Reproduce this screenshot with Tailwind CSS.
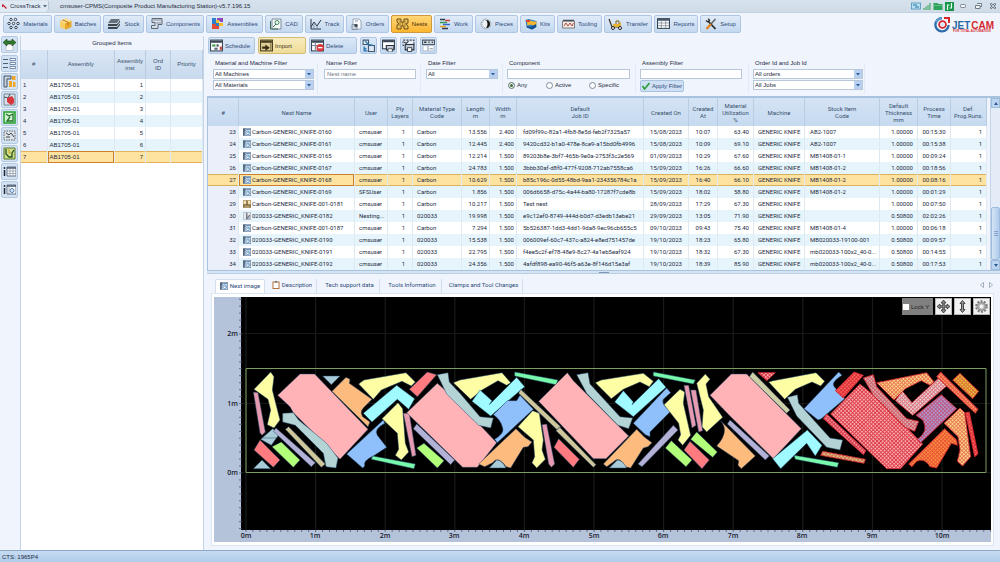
<!DOCTYPE html>
<html lang="en">
<head>
<meta charset="UTF-8">
<meta name="viewport" content="width=device-width, initial-scale=1.0">
<title>CrossTrack</title>
<script src="https://cdn.jsdelivr.net/npm/@tailwindcss/browser@4"></script>
</head>
<body class="font-['Liberation_Sans',sans-serif] text-[6px] leading-[8px] text-[#1d2b3f] bg-[#f0f5fd]">

<!-- Shared icons -->
<svg class="hidden">
  <symbol id="i-job" viewBox="0 0 10 10">
    <rect width="10" height="10" fill="#7f95ad"/><path d="M3 1h6v8H3z" fill="#e6eff9"/><path d="M1 1v8M2.500 1v3" stroke="#33475e"/><circle cx="6" cy="6" r="2.300" fill="#fff" stroke="#2a6fa8" stroke-width=".8"/><path d="M6 4.500V6h1.500" stroke="#2a6fa8" stroke-width=".7" fill="none"/><path d="M4 2h5" stroke="#3b6fa0"/>
  </symbol>
  <symbol id="i-grid" viewBox="0 0 12 12">
    <rect x=".5" y="1.500" width="11" height="9" fill="#fff" stroke="#3a4756"/><path d="M1 2.500h10" stroke="#47586c" stroke-width="2"/><path d="M1 5.500h10M1 8h10M4 3v7M8 3v7" stroke="#7a8796" stroke-width=".7"/>
  </symbol>
  <symbol id="i-test" viewBox="0 0 10 10">
    <rect width="10" height="10" fill="#b39a6b"/><path d="M1 1h3v5H1zM6 1h3v5H6z" fill="#efe0b6"/><path d="M1 9V6h8v3M5 1v5" stroke="#5f4a25" fill="none"/>
  </symbol>
  <symbol id="i-nest" viewBox="0 0 10 10">
    <rect width="10" height="10" fill="#b4bcc4"/><path d="M1 1h3v8H1zM6 1h3v3H6z" fill="#e8ecef"/><path d="M4.500 1v8M9 4L6 6v3" stroke="#55606b" fill="none"/>
  </symbol>
</svg>

<div class="min-h-screen flex flex-col">

  <!-- Title bar -->
  <header class="h-[13px] flex items-center bg-gradient-to-b from-[#d6e2ec] to-[#cfdce8] border-b border-[#c3d2e0] shrink-0">
    <button class="h-[11px] w-[49px] flex items-center gap-[3px] pl-[2px] bg-[#dfe9f4] border-r border-[#b9c9da] rounded-br">
      <svg class="size-[5px]" viewBox="0 0 5 5"><path d="M.5.5l4 4M.5.5v2.500" stroke="#c4212b" stroke-width="1.200" fill="none"/></svg>
      <span>CrossTrack</span>
      <svg class="w-[4px] h-[3px]" viewBox="0 0 4 3"><path d="M0 0h4L2 2.500z" fill="#51677f"/></svg>
    </button>
    <h1 class="ml-[11px]">cmsuser-CPMS(Composite Product Manufacturing Station)-v5.7.196.15</h1>
    <div class="ml-auto flex items-center gap-[2px]">
      <svg class="w-[10px] h-[8px]" viewBox="0 0 10 8"><rect x=".5" y="1" width="9" height="6" fill="#b9e0f2" stroke="#4a92b8" stroke-width=".8"/><path d="M2 3h4M4 5h4" stroke="#28769f"/></svg>
      <svg class="size-[8px]" viewBox="0 0 8 8"><path d="M1 8V6M3 8V4.500M5 8V3M7 8V1" stroke="#53ad72" stroke-width="1.300"/></svg>
      <svg class="w-[10px] h-[8px]" viewBox="0 0 10 8"><path d="M.5 1h4l1 1h4v6h-9z" fill="#2ba35a"/><path d="M.5 3.500h9" stroke="#83d29f" stroke-width=".6"/></svg>
      <svg class="size-[9px]" viewBox="0 0 9 9"><rect width="9" height="9" fill="#169447"/><path d="M2.500 8V3h2M6.500 1v5h-2" stroke="#eafff0" stroke-width="1.200" fill="none"/></svg>
      <button class="w-[14px] grid place-items-center" aria-label="Minimize"><svg class="w-[6px] h-[4px]" viewBox="0 0 6 4"><rect x=".5" y=".5" width="5" height="3" rx="1" fill="#f5f8fb" stroke="#62707e" stroke-width=".8"/></svg></button>
      <button class="w-[12px] grid place-items-center" aria-label="Restore"><svg class="size-[7px]" viewBox="0 0 7 7"><path d="M2 .5h4.500v3H5M.5 2.500H5v3H.5z" fill="#f5f8fb" stroke="#62707e" stroke-width=".9"/></svg></button>
      <button class="w-[14px] grid place-items-center" aria-label="Close"><svg class="size-[6px]" viewBox="0 0 6 6"><path d="M.5.5l5 5M5.500.5l-5 5" stroke="#62707e" stroke-width="2"/><path d="M1 1l4 4M5 1L1 5" stroke="#f5f8fb" stroke-width=".7"/></svg></button>
    </div>
  </header>

  <!-- Main toolbar -->
  <nav class="flex items-center gap-[2px] pl-[3px] pt-px h-[20px] shrink-0 text-[#2d4a78] *:h-[18px] *:flex *:items-center *:justify-center *:gap-[3px] [&>button]:rounded-xs [&>button]:border [&>button]:border-[#afc7e2] [&>button]:bg-gradient-to-b [&>button]:from-[#e0ebf8] [&>button]:to-[#c3d8f0] [&_svg]:shrink-0">
    <button class="w-[49px]">
      <svg class="size-[13px]" viewBox="0 0 13 13"><g fill="#fff" stroke="#2d3c50"><circle cx="4" cy="2.500" r="1.200"/><circle cx="8.500" cy="2.500" r="1.200"/><circle cx="2" cy="6.500" r="1.200"/><circle cx="6.500" cy="6.500" r="1.200"/><circle cx="11" cy="6.500" r="1.200"/><circle cx="4" cy="10.500" r="1.200"/><circle cx="9" cy="10.500" r="1.200"/></g></svg>Materials</button>
    <button class="w-[47px]">
      <svg class="size-[13px]" viewBox="0 0 13 13"><path d="M1 4l6-2.500L12.500 4v6L7 12.500 1 10z" fill="#e8a52c"/><path d="M1 4l5 2v6.500L1 10z" fill="#f7cf62"/><path d="M1 4l6-2.500L12.500 4 6 6.200z" fill="#ffe39a"/><path d="M3.500 3l5.500 2.200V8" stroke="#b87413" fill="none"/></svg>Batches</button>
    <button class="w-[41px]">
      <svg class="w-[14px] h-[12px]" viewBox="0 0 14 12"><path d="M4 1h9l-3 4H1z" fill="#66717d"/><path d="M1 6h9l3-4v2l-3 4H1zM1 9h9l3-4v2l-3 4H1z" fill="#3d4752"/><path d="M1 5.500h9l3-4M1 8.500h9l3-4" stroke="#c8d0d8" stroke-width=".7" fill="none"/></svg>Stock</button>
    <button class="w-[58px]">
      <svg class="size-[13px]" viewBox="0 0 13 13"><path d="M2 1.500h10v6H8v4H1.500v-3H5v-3H2z" fill="#d8dee6" stroke="#5a6777"/><path d="M3 3h8M6 6h5" stroke="#8894a2"/></svg>Components</button>
    <button class="w-[57px]">
      <svg class="size-[13px]" viewBox="0 0 13 13"><path d="M1 1h4v5h3v6H1z" fill="#2c7fce"/><path d="M6 1h6v4H9V4H6z" fill="#9048b8"/><path d="M5 3h3v3h4v3H8V6H5z" fill="#f4be2c"/><path d="M1 7h4v2h3v3H1z" fill="#e34b33"/></svg>Assemblies</button>
    <button class="w-[38px]">
      <svg class="size-[12px]" viewBox="0 0 12 12"><path d="M2 1h9v10H2z" fill="#f4f7f4" stroke="#657585" stroke-width=".8"/><circle cx="7" cy="4.500" r="2" fill="none" stroke="#3d8a63"/><path d="M.5 3v8H8M3 9l3-3" stroke="#3d6c52" fill="none"/></svg>CAD</button>
    <button class="w-[39px]">
      <svg class="size-[12px]" viewBox="0 0 12 12"><path d="M1 1v10h10M1 9l3-5 3 4 4-6" fill="none" stroke="#2c3748"/><path d="M4 4v6M7 8v2" stroke="#687688" stroke-width=".7"/></svg>Track</button>
    <button class="w-[43px]">
      <svg class="size-[12px]" viewBox="0 0 12 12"><path d="M2 1h6l2 2v8H2z" fill="#fafcff" stroke="#7a8796" stroke-width=".7"/><path d="M4 3h3M1 6.500h5v5H1z" stroke="#8895a3" fill="#cad3dc"/><circle cx="5" cy="7.500" r="1.700" fill="#454f5b"/></svg>Orders</button>
    <button class="w-[41px] text-[#3b2500] from-[#ffd777]! to-[#fdb62c]! border-[#cf9a3e]!">
      <svg class="w-[13px] h-[12px]" viewBox="0 0 13 12"><path d="M1 1h4v3h3V1h4v4l-2 1 2 2v3H8V8H5v3H1V7l2-1-2-2z" fill="#e9bd53" stroke="#5d4716" stroke-width=".9"/><path d="M6.500 4v4M4 3v5M9 3v5" stroke="#86651c" stroke-width=".7"/></svg>Nests</button>
    <button class="w-[39px]">
      <svg class="size-[12px]" viewBox="0 0 12 12"><path d="M1 1.500h5M3 10.500h6" stroke="#2f3d4e" stroke-width="1.500"/><path d="M6 2.500h5" stroke="#d63d32" stroke-width="1.500"/><path d="M1 4.500h7" stroke="#2e9c4c" stroke-width="1.500"/><path d="M4 6.500h7" stroke="#3369cf" stroke-width="1.500"/><path d="M1 8.500h6" stroke="#e3a324" stroke-width="1.500"/></svg>Work</button>
    <button class="w-[43px]">
      <svg class="size-[12px]" viewBox="0 0 12 12"><circle cx="6" cy="6" r="5" fill="#eef2f6" stroke="#9aa6b2" stroke-width=".8"/><path d="M6 2a4 4 0 0 1 0 8 6 6 0 0 0 0-8z" fill="#111"/><path d="M6 2a4 4 0 0 0 0 8" fill="none" stroke="#77828d" stroke-width=".8" stroke-dasharray="1 1"/></svg>Pieces</button>
    <button class="w-[35px]">
      <svg class="w-[12px] h-[12px]" viewBox="0 0 12 12"><path d="M.5 2l3-1 8 2v6l-4 2.500-6-2z" fill="#2d84cf"/><path d="M2 4c3-4 6 1 9.500-1v4c-3 2-5-2-9 1z" fill="#f7b52b"/><path d="M1 2h4v2H1z" fill="#e2472e"/><path d="M2 8l4 1 5-3v3l-4 2.500-5-2z" fill="#174b8a"/></svg>Kits</button>
    <button class="w-[45px]">
      <svg class="w-[13px] h-[10px]" viewBox="0 0 13 10"><path d="M.5 2h12v7H.5z" fill="#f2ece8" stroke="#6b5f5d" stroke-width=".8"/><path d="M1 1.500h11" stroke="#4b4f57" stroke-width="1.500"/><path d="M2 7l2-3 2 3 2-3 2 3 1.500-3" stroke="#b2493d" fill="none"/></svg>Tooling</button>
    <button class="w-[48px]">
      <svg class="w-[15px] h-[12px]" viewBox="0 0 15 12"><path d="M1 1l3 8h9" stroke="#3a3325" stroke-width="1.200" fill="none"/><path d="M5 6h6l2-2v5H5z" fill="#e6b32e"/><path d="M8 6V3h3v3" stroke="#83620f" fill="none"/><g fill="#fff" stroke="#222"><circle cx="5" cy="10" r="1.500"/><circle cx="12" cy="10" r="1.500"/></g></svg>Transfer</button>
    <button class="w-[44px]"><svg class="size-[13px]"><use href="#i-grid"/></svg>Reports</button>
    <button class="w-[41px]">
      <svg class="size-[12px]" viewBox="0 0 12 12"><path d="M3 3l7.500 8" stroke="#2b2b2b" stroke-width="1.800"/><path d="M.8 2.500L3 4l1.500-1.500L3.300.7" stroke="#2b2b2b" stroke-width="1.300" fill="none"/><path d="M10.500 1L6 6" stroke="#555" stroke-width="1.200"/><path d="M6 6l-4.500 5" stroke="#e2801c" stroke-width="2.200"/></svg>Setup</button>
    <div class="ml-auto pt-[2px]">
      <svg class="w-[67px] h-[17px]" viewBox="0 0 67 17" role="img" aria-label="JETCAM for total automation">
        <path d="M9 2.200A6.600 6.600 0 1 0 15.600 9" fill="none" stroke="#2c6ca8" stroke-width="2.300"/>
        <path d="M9 2.200a6.600 6.600 0 0 0-6 4" fill="none" stroke="#5b9bca" stroke-width="2.300"/>
        <path d="M11 1h6v6h-2V3h-4z" fill="#d5282e"/>
        <circle cx="9.500" cy="8.500" r="3.400" fill="none" stroke="#d5282e" stroke-width="1.800"/><circle cx="9.500" cy="8.500" r="1.200" fill="#c9dcee"/>
        <text x="19" y="13" font-size="10" font-weight="bold" fill="#2a689f">JET<tspan dx="1" fill="#d5282e">CAM</tspan></text>
        <text x="20" y="16" font-size="3" font-weight="bold" fill="#d5282e">FOR TOTAL AUTOMATION</text>
      </svg>
    </div>
  </nav>

  <div class="flex flex-1 pt-[3px]">

    <!-- Left tool strip -->
    <aside class="w-[20px] shrink-0 flex flex-col items-center gap-px pr-px [&>button]:size-[17px] [&>button]:grid [&>button]:place-items-center [&>button]:rounded-xs [&>button]:border [&>button]:border-[#b3c9e2] [&>button]:bg-[#d3e2f3] [&_svg]:size-[13px]">
      <button class="mb-px" aria-label="Exchange"><svg viewBox="0 0 13 13"><path d="M3 6h7v6.500H3z" fill="#fff" stroke="#a6b3c0" stroke-width=".7"/><path d="M0 4.500L4 1v2h5V1l4 3.500L9 8V6H4v2z" fill="#2f7a2c" stroke="#173f16" stroke-width=".6"/></svg></button>
      <button aria-label="Group rows"><svg viewBox="0 0 13 13"><path d="M0 2.500h5M0 6.500h5M0 10.500h5" stroke="#4d5f73"/><path d="M7 1.500h5.500v2H7zM7 5.500h5.500v2H7zM7 9.500h5.500v2H7z" fill="#fff" stroke="#5a7396" stroke-width=".8"/></svg></button>
      <button aria-label="Nest parts"><svg viewBox="0 0 13 13"><path d="M1 1h7v3H4v8H1z" fill="#c7d2dd" stroke="#40536a"/><path d="M9 1h3.500v4H9zM6 6h3v6H6zM10 7h2.500v5H10z" fill="#f2a52b"/></svg></button>
      <button aria-label="Stop nest"><svg viewBox="0 0 13 13"><path d="M1 1h11v11H1z" fill="#d7dfe8" stroke="#7b8795"/><path d="M1 4l4 1 2-4" stroke="#3d4d60" fill="none"/><path d="M4 5l5-2 2 3v4l-3 2-4-3z" fill="#d7373c"/></svg></button>
      <button aria-label="Approve nest"><svg viewBox="0 0 13 13"><path d="M1 1h11v11H1z" fill="#d4efd2" stroke="#20a02b" stroke-width="1.500"/><path d="M3 3l3 2 4-2v7H4l3-4" fill="none" stroke="#1c7327" stroke-width="1.300"/></svg></button>
      <button aria-label="Scrap nest"><svg viewBox="0 0 13 13"><path d="M1 2h11v9H1z" fill="#dce1e6" stroke="#5c6670" stroke-dasharray="1.500 1"/><path d="M3 4l3 2 2-2 3 4M3 8h4" stroke="#3e4852" fill="none"/></svg></button>
      <button aria-label="Edit nest"><svg viewBox="0 0 13 13"><path d="M1 1h11v11H1z" fill="#cfe08c" stroke="#57742a"/><path d="M3 2v5l3 3h3V6l2-3" fill="none" stroke="#26521e" stroke-width="1.300"/><path d="M6 2v4h2" stroke="#c79f1f" fill="none"/></svg></button>
      <button aria-label="Grid columns"><svg viewBox="0 0 13 13"><path d="M4 2h9v9H4z" fill="#fff" stroke="#44566c" stroke-width=".8"/><path d="M4 3h9" stroke="#44566c" stroke-width="1.500"/><path d="M4 6h9M4 8.500h9M7 3v8M10 3v8" stroke="#8290a0" stroke-width=".7"/><path d="M1.500 5v6" stroke="#1d2733" stroke-width="1.500"/><circle cx="1.500" cy="3" r=".9" fill="#1d2733"/></svg></button>
      <button aria-label="Row details"><svg viewBox="0 0 13 13"><path d="M4 2h9v9H4z" fill="#fff" stroke="#44566c" stroke-width=".8"/><path d="M4 3h9" stroke="#44566c" stroke-width="1.500"/><circle cx="9" cy="7.500" r="2" fill="#dcebfa" stroke="#4a7fb8"/><path d="M6 3v8" stroke="#8290a0" stroke-width=".7"/><path d="M1.500 5v6" stroke="#1d2733" stroke-width="1.500"/><circle cx="1.500" cy="3" r=".9" fill="#1d2733"/></svg></button>
    </aside>

    <!-- Grouped items -->
    <section class="w-[184px] shrink-0 flex flex-col bg-white border-x border-[#c5d5e8]">
      <h2 class="h-[14px] pt-[3px] text-center bg-[#f0f5fd]">Grouped Items</h2>
      <table class="w-full table-fixed border-collapse">
        <colgroup><col class="w-[26px]"><col><col class="w-[31px]"><col class="w-[25px]"><col class="w-[32px]"></colgroup>
        <thead>
          <tr class="h-[29px] bg-gradient-to-b from-[#d9e6f4] to-[#c9daee] text-[#38506e] [&>th]:font-normal [&>th]:leading-[7px] [&>th]:border-r [&>th]:border-[#b9cce2] [&>th]:p-0">
            <th>#</th><th>Assembly</th><th>Assembly<br>inst</th><th>Ord<br>ID</th><th>Priority</th>
          </tr>
        </thead>
        <tbody id="groupedRows"></tbody>
      </table>
    </section>

    <main class="flex-1 min-w-0 flex flex-col pl-[3px]">

      <!-- Actions -->
      <div class="flex gap-[3px] pl-px pt-px text-[#2d4a78] [&>button]:h-[17px] [&>button]:w-[17px] [&>button]:flex [&>button]:items-center [&>button]:justify-center [&>button]:gap-[2px] [&>button]:rounded-xs [&>button]:border [&>button]:border-[#afc7e2] [&>button]:bg-gradient-to-b [&>button]:from-[#dbe8f7] [&>button]:to-[#c3d8f0] [&_svg]:size-[13px]">
        <button class="w-[47px]! justify-start! pl-px"><svg viewBox="0 0 12 12"><rect x=".5" y="1" width="11" height="10" fill="#fff" stroke="#3a4756"/><path d="M1 2.500h10" stroke="#3a4756" stroke-width="2"/><path d="M2 5h3v2H2z" fill="#3a9b4b"/><path d="M6 5h2v2H6z" fill="#3d4a58"/><path d="M9 7h2v3H9z" fill="#cf433a"/><path d="M4 8h3v2H4z" fill="#5a6b7c"/></svg>Schedule</button>
        <button class="w-[48px]! justify-start! pl-px text-[#3b3216] border-[#d2bd74]! from-[#f8ecbd]! to-[#efdc98]!"><svg viewBox="0 0 12 12"><rect x=".5" y="1" width="11" height="10" fill="#dfcf98" stroke="#4b4022"/><path d="M1 2.500h10" stroke="#4b4022" stroke-width="2"/><path d="M2 7h3V5l4 3-4 3V9H2z" fill="#3a2e12"/><path d="M10 4v6" stroke="#7c6a39"/></svg>Import</button>
        <button class="w-[48px]! justify-start! pl-px"><svg viewBox="0 0 12 12"><rect x=".5" y="1" width="11" height="10" fill="#fff" stroke="#3a4756"/><path d="M1 2.500h10" stroke="#3a4756" stroke-width="2"/><path d="M1 6h10M4 3v8" stroke="#7a8796"/><circle cx="8.500" cy="8" r="3.500" fill="#d8393b"/><path d="M6.500 8h4" stroke="#fff" stroke-width="1.200"/></svg>Delete</button>
        <button aria-label="Nest report"><svg viewBox="0 0 12 12"><path d="M1 1h5v4H1zM6 6h5.500v5.500H6z" fill="#dde9f3" stroke="#44596f"/><path d="M3 2l3 3 4 1M2 7v4h3M2 9h2" stroke="#2a77a8" fill="none" stroke-width="1.200"/></svg></button>
        <button aria-label="Print grid"><svg viewBox="0 0 12 12"><rect x=".5" y="1" width="11" height="8" fill="#fff" stroke="#3a4756"/><path d="M1 2h10" stroke="#3a4756" stroke-width="2"/><path d="M4 6h7v4H4z" fill="#c3ccd6" stroke="#27323e"/><path d="M5.500 9h4v3h-4z" fill="#fff" stroke="#27323e" stroke-width=".7"/></svg></button>
        <button aria-label="Print nest"><svg viewBox="0 0 12 12"><path d="M1 1h10v5H1z" fill="#e7edf3" stroke="#3a4756" stroke-dasharray="2 1"/><path d="M3 5h8v5H3z" fill="#c3ccd6" stroke="#27323e"/><path d="M5 8h4v3.500H5z" fill="#fff" stroke="#27323e" stroke-width=".8"/><path d="M2 3l2 1 2-2" stroke="#27323e" fill="none"/></svg></button>
        <button aria-label="Labels"><svg viewBox="0 0 12 12"><path d="M.5 1h11v4H.5z" fill="#d0dae3" stroke="#4c5b6b"/><path d="M2 3h2M6 3h1M9 3h1" stroke="#27323e" stroke-width="1.500"/><path d="M1 6h4v5H1zM6 6h5v5H6z" fill="#fff" stroke="#a9b6c3" stroke-width=".7"/><path d="M7 9h3" stroke="#8b98a5"/></svg></button>
      </div>

      <!-- Filters -->
      <form class="flex gap-[4px] pl-[5px] pt-[3px] h-[42px] [&_fieldset]:border-r [&_fieldset]:border-[#e1eaf5] [&_fieldset]:h-[37px] [&_legend]:h-[12px] [&_legend]:pt-[2px] [&_legend]:pl-[2px] [&_input[type=text]]:block [&_input[type=text]]:h-[10px] [&_input[type=text]]:w-full [&_input[type=text]]:bg-white [&_input[type=text]]:border [&_input[type=text]]:border-[#b8c8da] [&_input[type=text]]:px-[2px] [&_select]:appearance-none [&_select]:block [&_select]:w-full [&_select]:h-[10px] [&_select]:leading-[8px] [&_select]:px-px [&_select]:bg-white [&_select]:border [&_select]:border-[#b8c8da]">
        <fieldset class="w-[106px] pl-px pr-[3px]">
          <legend>Material and Machine Filter</legend>
          <div class="relative mb-px"><select aria-label="Machine"><option>All Machines</option></select><span class="absolute right-px inset-y-px w-[8px] bg-[#b9d1f0] grid place-items-center pointer-events-none"><svg class="w-[4px] h-[3px]" viewBox="0 0 4 3"><path d="M0 0h4L2 2.500z" fill="#2f5b98"/></svg></span></div>
          <div class="relative"><select aria-label="Material"><option>All Materials</option></select><span class="absolute right-px inset-y-px w-[8px] bg-[#b9d1f0] grid place-items-center pointer-events-none"><svg class="w-[4px] h-[3px]" viewBox="0 0 4 3"><path d="M0 0h4L2 2.500z" fill="#2f5b98"/></svg></span></div>
        </fieldset>
        <fieldset class="w-[99px] pl-[2px] pr-[4px]">
          <legend>Name Filter</legend>
          <input type="text" placeholder="Nest name" aria-label="Name Filter" class="placeholder:text-[#6b7683]">
        </fieldset>
        <fieldset class="w-[78px] pl-px pr-[4px]">
          <legend>Date Filter</legend>
          <div class="relative"><select aria-label="Date Filter"><option>All</option></select><span class="absolute right-px inset-y-px w-[8px] bg-[#b9d1f0] grid place-items-center pointer-events-none"><svg class="w-[4px] h-[3px]" viewBox="0 0 4 3"><path d="M0 0h4L2 2.500z" fill="#2f5b98"/></svg></span></div>
        </fieldset>
        <fieldset class="w-[129px] pr-[5px]">
          <legend>Component</legend>
          <input type="text" aria-label="Component">
          <div class="flex pt-[2px] pl-px [&>label]:flex [&>label]:items-center [&>label]:gap-[2px] [&_input]:appearance-none [&_input]:size-[7px] [&_input]:rounded-full [&_input]:border [&_input]:border-[#7d8b9a] [&_input]:bg-white [&_input]:checked:bg-[#3d6a35] [&_input]:checked:shadow-[inset_0_0_0_1px_#fff]">
            <label class="w-[38px]"><input type="radio" name="component" checked>Any</label>
            <label class="w-[43px]"><input type="radio" name="component">Active</label>
            <label><input type="radio" name="component">Specific</label>
          </div>
        </fieldset>
        <fieldset class="w-[109px] pr-[6px]">
          <legend>Assembly Filter</legend>
          <input type="text" aria-label="Assembly Filter">
          <button type="button" class="mt-px h-[12px] w-[44px] flex items-center justify-center gap-[2px] whitespace-nowrap bg-[#cfe0f4] border border-[#a9c2de] rounded-xs text-[#2d4a78]"><svg class="size-[8px] shrink-0" viewBox="0 0 8 8"><path d="M.5 4l2 3 5-6" stroke="#2f9e3b" stroke-width="1.700" fill="none"/></svg>Apply Filter</button>
        </fieldset>
        <fieldset class="w-[112px] pr-px">
          <legend>Order Id and Job Id</legend>
          <div class="relative mb-px"><select aria-label="Order Id"><option>All orders</option></select><span class="absolute right-px inset-y-px w-[8px] bg-[#b9d1f0] grid place-items-center pointer-events-none"><svg class="w-[4px] h-[3px]" viewBox="0 0 4 3"><path d="M0 0h4L2 2.500z" fill="#2f5b98"/></svg></span></div>
          <div class="relative"><select aria-label="Job Id"><option>All Jobs</option></select><span class="absolute right-px inset-y-px w-[8px] bg-[#b9d1f0] grid place-items-center pointer-events-none"><svg class="w-[4px] h-[3px]" viewBox="0 0 4 3"><path d="M0 0h4L2 2.500z" fill="#2f5b98"/></svg></span></div>
        </fieldset>
      </form>

      <!-- Nests table -->
      <div class="flex border-y border-[#a9c3de] border-t-2 font-['Roboto',sans-serif]">
        <div class="flex-1 min-w-0">
        <table class="w-full table-fixed border-collapse border-l border-[#a9c3de]">
          <colgroup>
            <col class="w-[31px]"><col class="w-[116px]"><col class="w-[33px]"><col class="w-[25px]"><col class="w-[49px]"><col class="w-[28px]"><col class="w-[27px]"><col><col class="w-[45px]"><col class="w-[29px]"><col class="w-[36px]"><col class="w-[51px]"><col class="w-[75px]"><col class="w-[38px]"><col class="w-[33px]"><col class="w-[36px]">
          </colgroup>
          <thead>
            <tr class="h-[28px] bg-gradient-to-b from-[#d4e3f4] to-[#c6daf0] text-[#38506e] [&>th]:font-normal [&>th]:leading-[7px] [&>th]:border-r [&>th]:border-[#b9cce2] [&>th]:p-0">
              <th>#</th><th>Nest Name</th><th>User</th><th>Ply<br>Layers</th><th>Material Type<br>Code</th><th>Length<br>m</th><th>Width<br>m</th><th>Default<br>Job ID</th><th>Created On</th><th>Created<br>At</th><th>Material<br>Utilization<br>%</th><th>Machine</th><th>Stock Item<br>Code</th><th>Default<br>Thickness<br>mm</th><th>Process<br>Time</th><th>Def.<br>Prog.Runs.</th>
            </tr>
          </thead>
          <tbody id="nestRows"></tbody>
        </table>
        </div>
        <!-- Scrollbar -->
        <div class="w-[13px] pl-[3px] flex flex-col bg-[#f0f5fd]">
          <div class="flex-1 flex flex-col bg-[#e3ecf7] border-l border-[#c3d4e8]">
            <button class="h-[10px] bg-[#bcd4f0] border border-[#9fbbdc] grid place-items-center" aria-label="Scroll up"><svg class="w-[4px] h-[3px]" viewBox="0 0 4 3"><path d="M0 3h4L2 0z" fill="#2f5b98"/></svg></button>
            <div class="flex-1"></div>
            <div class="h-[53px] bg-gradient-to-r from-[#d5e4f6] to-[#aecaeb] border border-[#9fbbdc] rounded-xs grid place-items-center"><svg class="w-[4px] h-[5px]" viewBox="0 0 4 5"><path d="M0 .5h4M0 2.500h4M0 4.500h4" stroke="#7798c0" stroke-width=".8"/></svg></div>
            <button class="h-[10px] bg-[#bcd4f0] border border-[#9fbbdc] grid place-items-center" aria-label="Scroll down"><svg class="w-[4px] h-[3px]" viewBox="0 0 4 3"><path d="M0 0h4L2 3z" fill="#2f5b98"/></svg></button>
          </div>
        </div>
      </div>
      <div class="h-[3px] bg-[#d5e4f4] border-b border-[#b9cfe6] grid place-items-center shrink-0"><span class="w-[10px] h-px bg-[#7d97b5]"></span></div>

      <!-- Tabs -->
      <div class="flex items-end pt-[5px] pl-[8px] gap-[3px] text-[#2d4a78] font-['Roboto',sans-serif] [&>button]:h-[14px] [&>button]:pb-[2px] [&>button]:flex [&>button]:items-center [&>button]:justify-center [&>button]:gap-[2px] [&>button]:border-r [&>button]:border-[#d3dfed]">
        <button class="w-[50px] bg-white border-x border-t rounded-t-xs"><svg class="size-[8px]"><use href="#i-job"/></svg>Nest image</button>
        <button class="w-[49px]"><svg class="size-[8px]" viewBox="0 0 8 8"><rect x="1" y="1" width="6" height="6.500" fill="#fff" stroke="#b2713a"/><path d="M3 .8h2" stroke="#6c6c6c" stroke-width="1.400"/></svg>Description</button>
        <button class="w-[60px]">Tech support data</button>
        <button class="w-[59px]">Tools Information</button>
        <button class="w-[78px]">Clamps and Tool Changes</button>
        <div class="ml-auto flex gap-[5px] pr-[7px] pb-[5px]">
          <svg class="w-[4px] h-[6px]" viewBox="0 0 4 6"><path d="M3.500.5v5L.5 3z" fill="#fff" stroke="#7d8ea2" stroke-width=".7"/></svg>
          <svg class="w-[4px] h-[6px]" viewBox="0 0 4 6"><path d="M.5.5v5l3-2.500z" fill="#fff" stroke="#7d8ea2" stroke-width=".7"/></svg>
        </div>
      </div>

      <!-- Nest drawing -->
      <div class="relative flex-1 flex flex-col bg-white border border-[#dbe5f1] ml-[4px] mr-[6px] mb-[4px] px-[2px] pt-[3px] pb-[3px]">
        <svg class="w-full bg-black" viewBox="214 297 777 245" font-family="'Open Sans', sans-serif" font-size="7" font-weight="600">
          <defs>
            <pattern id="ticksX" x="245.500" y="530" width="6.960" height="12" patternUnits="userSpaceOnUse"><path d="M.5 0v2" stroke="#48566e" stroke-width=".8"/></pattern>
            <pattern id="ticksY" x="239" y="333.500" width="3" height="6.950" patternUnits="userSpaceOnUse"><path d="M0 .5h3" stroke="#48566e" stroke-width=".8"/></pattern>
            <pattern id="gridX" x="245.500" y="0" width="69.600" height="600" patternUnits="userSpaceOnUse"><path d="M.5 0v600" stroke="#1b1f1b" stroke-width="1"/></pattern>
            <pattern id="hatch" width="8" height="8" patternUnits="userSpaceOnUse" patternTransform="rotate(45)"><path d="M0 4H8M4 0V8" stroke="#d21f2c" stroke-width="3.200"/></pattern>
          </defs>
          <rect x="214" y="297" width="777" height="245" fill="#b5c3da"/>
          <rect x="241" y="297" width="750" height="233" fill="#000"/>
          <rect x="241" y="297" width="750" height="233" fill="url(#gridX)"/>
          <path d="M241 333.500h750M241 403.500h750M241 472.500h750" stroke="#151815"/>
          <rect x="241" y="530" width="750" height="3" fill="url(#ticksX)"/>
          <rect x="239" y="297" width="3" height="233" fill="url(#ticksY)"/>
          <g fill="#16202e" text-anchor="end"><text x="238" y="336">2m</text><text x="238" y="406">1m</text><text x="238" y="475">0m</text></g>
          <g fill="#16202e" text-anchor="middle">
            <text x="246" y="538">0m</text><text x="315" y="538">1m</text><text x="385" y="538">2m</text><text x="454" y="538">3m</text><text x="524" y="538">4m</text><text x="594" y="538">5m</text><text x="663" y="538">6m</text><text x="733" y="538">7m</text><text x="802" y="538">8m</text><text x="872" y="538">9m</text><text x="942" y="538">10m</text>
          </g>
          <path d="M246 368.500h740v104H246z" fill="none" stroke="#7d9c62"/>

          <!-- Sheet 0m to 3.6m -->
          <g transform="translate(240 360) scale(.33333)" stroke="#24466a" stroke-width="1.500">
            <path fill="#feffa5" d="M42 88L92 36l10 14-5 40 23 90-18 24-20-10 10-44-8-32zM356 72l16-12 126-22 28 28-12 12-28-14-62 26-24 28zM474 128l14 18 8 104 10 26-22 24-18-14 10-18-4-48-46-44zM640 68l20-8 126-22 26 30-12 8-26-14-48 28-34 28z"/>
            <path fill="#e79bb0" d="M40 96l14 2 22 118-10 10-6-8zM490 160h18l20 126-12 4z"/>
            <path fill="#ffb3b7" d="M180 42h44l160 166-84 90-140-140-10-18-37-34zM592 70l48 42 96 100 34 36-58 74h-44L500 158z"/>
            <path fill="#a9cbd8" d="M248 48h52l-26 26zM62 238l36-32 20 16-24 34zM66 300l-26 26h52z"/>
            <path fill="#fdbb7d" d="M318 52l12 6-2 12 68 48-24 24q-14 14-4 28l22 16-6 14L276 94z"/>
            <path fill="#9ffbff" d="M470 76l54 40-18 32-34-30-76 68-26-26z"/>
            <path fill="#ff7b80" d="M562 36l28 8-58 66-24-22zM60 240l60 60-20 22-58-52z"/>
            <path fill="#b4d3d5" d="M592 44l32-6 4 28 32 34 60 70 40 4-8 30-36-8-96-94zM128 160l32-2 16 22 84 70 34 44-6 30-30-4-8-40-84-84-38-10z"/>
            <path fill="#b3b1d6" d="M108 204l118 104-12 12L100 214zM530 192l114 108-12 14-112-108z"/>
            <path fill="#cfc69a" d="M146 200l110 112-12 10-108-114z"/>
            <path fill="#b2ff79" d="M124 246l56 54-20 22-64-62zM552 250l60 52-20 22-62-60z"/>
            <path fill="#90c0fb" d="M430 180l4 10q-34 18-22 36l28 36-40 26q-32 14-26 30l-6 6-48-42z"/>
            <path fill="#78f9ac" d="M398 288l128 24-4 14-128-28z"/>
            <path d="M66 234h48" fill="none"/>
          </g>

          <!-- Sheet 3.6m to 7m -->
          <g transform="translate(480 360) scale(.33333)" stroke="#24466a" stroke-width="1.500">
            <path fill="#9ffbff" d="M0 90l-24 34 56 44L134 80l-24-28-82 82 8-12zM430 92l30 34-4 8 80-78 22 26-98 88-56-44z"/>
            <path fill="#90c0fb" d="M120 106l40 42L52 248l-8-10q30-18 24-34-6-26-28-40l42-42h28zM560 84l12 14-22 20q-8 14 22 36l-62 62v14l-14-6-36-34z"/>
            <path fill="#cfc69a" d="M122 88l120 112-10 10L116 100zM238 200l110 114-8 8-112-110z"/>
            <path fill="#78f9ac" d="M104 36l130 24-6 14-124-26zM520 36l126 24-6 12-120-24z"/>
            <path fill="#feffa5" d="M158 152l20 8 12 80-4 30 10 28-26 26-14-16 8-18-4-50-46-40zM346 68l18-8 126-20 30 24-12 16-28-14-50 22-36 28zM600 88l14 8-4 34 22 96-24 30-14-16 8-16-6-34-44-56zM676 42l14 16-12 14 8 38 42 62-48 44-14-16 4-50-20-80z"/>
            <path fill="#e79bb0" d="M186 194l14-2 24 120-10 10-8-10zM612 76h14l22 120-12 8zM632 90h16l20 122-12 4z"/>
            <path fill="#ff7b80" d="M236 236l62 62-18 24-58-60zM630 244l58 56-22 26-54-56z"/>
            <path fill="#fdbb7d" d="M108 206l26 26 22 14-12 14-14 2-38 62-14-4q-24-34-40-12L14 320l-18-8zM470 208l24 24 22 16-12 12-14 4-38 60-16-4q-18-34-36-14l-20 14-10-8zM722 182l104 106-42 38-10-10 2-14-66-44q40-44 12-76z"/>
            <path fill="#a9cbd8" d="M50 300l-22 24h50q-12-24-28-24zM412 300l-24 24h52q-12-24-28-24z"/>
            <path fill="#ffb3b7" d="M262 38l18 24 166 166-68 68h-38L176 124z"/>
            <path fill="#b4d3d5" d="M290 44l34-6 6 34 90 98 38 4-12 32-32-10-94-96z"/>
            <path fill="#b3b1d6" d="M580 196l14 14-108 110-12-8z"/>
            <path fill="#b2ff79" d="M650 216l62 60-14 16-66-54zM574 242l62 58-18 20-62-56z"/>
          </g>

          <!-- Sheet 7m to the end -->
          <g transform="translate(730 360) scale(.33333)" stroke="#24466a" stroke-width="1.500">
            <path fill="#ffb3b7" d="M4 42h46l164 164-84 90L0 168l-60-62z"/>
            <path fill="#b3b1d6" d="M0 180l118 108-12 12L-8 192z"/>
            <path fill="#cfcfa5" d="M68 36l112 114-10 10L58 50z"/>
            <path fill="#feffa5" d="M116 66l14-4 128-24 26 26-12 14-26-12-50 22-32 30z"/>
            <path fill="#90c0fb" d="M326 36l10 10q-36 22-22 36l30 34-70 60-10 4-42-34z"/>
            <path fill="#b4d3d5" d="M172 112l30-8 4 26 94 104 38 6-8 30-40-8-90-94z"/>
            <path fill="#9ffbff" d="M232 210l44 46-20 32-26-38-78 76-24-30z"/>
            <path fill="#78f9ac" d="M192 286l134 22-4 14-126-24z"/>
          </g>
          <!-- Parts with warnings are cross-hatched -->
          <g transform="translate(730 360) scale(.33333)" stroke="#c4212b" stroke-width="2.500">
            <path fill="#ffb3b7" d="M84 38h52l-26 24zM390 72l70 58 118 122-66 74h-42L302 162z"/>
            <path fill="#e8dde0" d="M516 92l30 36 80-74 24 24-102 88-52-44z"/>
            <path fill="#ff6a62" d="M372 36l28 10-60 68-24-22zM706 158l12-2 26 126-10 8z"/>
            <path fill="#f093a0" d="M290 162l118 110-8 12-120-108z"/>
            <path fill="#d9d08a" d="M278 274l128 24-4 12-130-24z"/>
            <path fill="#d6b2b6" d="M400 54l30-10 10 36 90 96 36 8-12 30-34-14-90-94z"/>
            <path fill="#ffe08a" d="M440 68l150-30 22 28-12 10-26-14-48 24-34 34zM690 144l14 14 18 132-24 28-16-14 8-34-6-40-42-40z"/>
            <path fill="#ff9a66" d="M632 36l112 112-8 12L620 50z"/>
            <path fill="#e8c93f" d="M690 40l56 54-18 22-60-56z"/>
            <path fill="#a9a0e0" d="M634 104l46 42-110 104-8-12q36-24 16-58l-20-14z"/>
            <path fill="#ff9440" d="M644 206l36 34 2 16-18-6-44 74-20-4q-16-28-40-16l-14 16-10-8z"/>
          </g>
          <g transform="translate(730 360) scale(.33333)" fill="url(#hatch)">
            <path d="M84 38h52l-26 24zM390 72l70 58 118 122-66 74h-42L302 162zM372 36l28 10-60 68-24-22zM706 158l12-2 26 126-10 8zM290 162l118 110-8 12-120-108z" opacity=".8"/>
            <path d="M516 92l30 36 80-74 24 24-102 88-52-44zM278 274l128 24-4 12-130-24zM400 54l30-10 10 36 90 96 36 8-12 30-34-14-90-94zM440 68l150-30 22 28-12 10-26-14-48 24-34 34zM690 144l14 14 18 132-24 28-16-14 8-34-6-40-42-40zM632 36l112 112-8 12L620 50zM690 40l56 54-18 22-60-56zM634 104l46 42-110 104-8-12q36-24 16-58l-20-14zM644 206l36 34 2 16-18-6-44 74-20-4q-16-28-40-16l-14 16-10-8z" opacity=".55"/>
          </g>
        </svg>
        <div class="absolute top-[4px] right-[3px] flex gap-[2px] [&>button]:size-[17px] [&>button]:bg-[#f1f1f1] [&>button]:border [&>button]:border-[#b5b5b5] [&>button]:grid [&>button]:place-items-center [&_svg]:size-[13px]">
          <label class="w-[31px] h-[17px] flex items-center gap-[2px] pl-px bg-[#808080] text-[#222]"><input type="checkbox" class="appearance-none size-[6px] bg-white checked:bg-[#2b6cb0]">Lock Y</label>
          <button aria-label="Pan"><svg viewBox="0 0 13 13"><path d="M6.500 0L9 3H7.300v2.700H10V4l3 2.500L10 9V7.300H7.300V10H9l-2.500 3L4 10h1.700V7.300H3V9L0 6.500 3 4v1.700h2.700V3H4z" fill="#8a8a8a" stroke="#222" stroke-width=".7"/></svg></button>
          <button aria-label="Fit height"><svg viewBox="0 0 13 13"><path d="M6.500.5L9 3.500H7.500v6H9l-2.500 3-2.500-3h1.500v-6H4z" fill="#999" stroke="#222" stroke-width=".8"/></svg></button>
          <button aria-label="Settings"><svg viewBox="0 0 13 13"><circle cx="6.500" cy="6.500" r="5.400" fill="none" stroke="#777" stroke-width="1.800" stroke-dasharray="2 1.400"/><circle cx="6.500" cy="6.500" r="3.900" fill="none" stroke="#999" stroke-width="1.800"/><circle cx="6.500" cy="6.500" r="2.600" fill="#f4f4f4" stroke="#666" stroke-width=".5"/></svg></button>
        </div>
      </div>
    </main>
  </div>

  <footer class="h-[12px] shrink-0 flex items-center px-[2px] bg-gradient-to-b from-[#c7dcf3] to-[#aecbe9] border-t border-[#8ea9c6]">CTS: 1965P4</footer>
</div>

<script>
  const grouped = [1, 2, 3, 4, 5, 6, 7];
  document.getElementById('groupedRows').innerHTML = grouped.map(n => `
    <tr class="h-[12px] leading-[8px] [&>td]:p-0 [&>td]:px-[2px] [&>td]:border-r [&>td]:border-[#e0e8f2] ${n === 7 ? 'bg-[#fee3a0] shadow-[inset_0_1px_#e3b25a,inset_0_-1px_#e3b25a]' : 'odd:bg-white even:bg-[#e6f4fc]'}">
      <td class="${n === 7 ? '' : 'bg-[#eaeff9]'}">${n}</td>
      <td class="${n === 7 ? 'shadow-[inset_0_0_0_1px_#cf7f2a]' : ''}">AB1705-01</td>
      <td class="text-right">${n}</td><td></td><td></td>
    </tr>`).join('');

  // number, name, user, material, length, width, job, date, time, utilization, stock, thickness, process time
  const nests = [
    [23, 'Carbon-GENERIC_KNIFE-0160', 'cmsuser', 'Carbon', '13.556', '2.400', 'fd09f99c-82a1-4fb8-8e5d-feb2f7325a57', '15/08/2023', '10:07', '63.40', 'AB2-1007', '1.00000', '00:15:30'],
    [24, 'Carbon-GENERIC_KNIFE-0161', 'cmsuser', 'Carbon', '12.445', '2.400', '9420cd32-b1a0-478e-8ce9-a15bd0fb4996', '15/08/2023', '10:09', '69.10', 'AB2-1007', '1.00000', '00:15:38'],
    [25, 'Carbon-GENERIC_KNIFE-0165', 'cmsuser', 'Carbon', '12.214', '1.500', '89203b8e-3bf7-465b-9e0a-2753f3c2e569', '01/09/2023', '10:29', '67.60', 'MB1408-01-1', '1.00000', '00:09:24'],
    [26, 'Carbon-GENERIC_KNIFE-0167', 'cmsuser', 'Carbon', '24.783', '1.500', '3bbb30af-d8f0-477f-9208-712ab7558ca6', '15/09/2023', '16:26', '66.60', 'MB1408-01-2', '1.00000', '00:18:56'],
    [27, 'Carbon-GENERIC_KNIFE-0168', 'cmsuser', 'Carbon', '10.629', '1.500', 'b85c196c-0d55-48bd-9aa1-234356784c1a', '15/09/2023', '16:40', '66.10', 'MB1408-01-2', '1.00000', '00:08:16'],
    [28, 'Carbon-GENERIC_KNIFE-0169', 'SFSUser', 'Carbon', '1.856', '1.500', '006d6658-d75c-4a44-ba80-17287f7cde8b', '15/09/2023', '18:02', '58.80', 'MB1408-01-2', '1.00000', '00:01:29'],
    [29, 'Carbon-GENERIC_KNIFE-001-0181', 'cmsuser', 'Carbon', '10.217', '1.500', 'Test nest', '28/09/2023', '17:29', '67.30', '', '1.00000', '00:07:50'],
    [30, '020033-GENERIC_KNIFE-0182', 'Nesting...', '020033', '19.998', '1.500', 'e9c12ef0-8749-444d-b0d7-d3edb13ebe21', '29/09/2023', '13:05', '71.90', '', '0.50800', '02:02:26'],
    [31, 'Carbon-GENERIC_KNIFE-001-0187', 'cmsuser', 'Carbon', '7.294', '1.500', '5b526387-1dd3-4dd1-9da8-9ec96cb655c5', '09/10/2023', '09:43', '75.40', 'MB1408-01-4', '1.00000', '00:06:18'],
    [32, '020033-GENERIC_KNIFE-0190', 'cmsuser', '020033', '15.538', '1.500', '006009ef-60c7-437c-a824-e8ed751457de', '19/10/2023', '18:23', '65.80', 'MB020033-19100-001', '0.50800', '00:09:57'],
    [33, '020033-GENERIC_KNIFE-0191', 'cmsuser', '020033', '22.795', '1.500', 'f4ee5c2f-ef78-48e9-8c27-4a1eb5eaf924', '19/10/2023', '18:32', '67.30', 'mb020033-100x2_40-0...', '0.50800', '00:14:55'],
    [34, '020033-GENERIC_KNIFE-0192', 'cmsuser', '020033', '24.356', '1.500', '4afdf898-ea90-46f5-a63e-8f146d15e3af', '19/10/2023', '18:39', '85.90', 'mb020033-100x2_40-0...', '0.50800', '00:17:53'],
  ];
  const icons = { 29: 'i-test', 30: 'i-nest' };
  document.getElementById('nestRows').innerHTML = nests.map(r => {
    const on = r[0] === 27;
    return `
    <tr class="h-[12px] leading-[8px] whitespace-nowrap [&>td]:p-0 [&>td]:px-[4px] [&>td]:border-r [&>td]:border-[#e0e8f2] ${on ? 'bg-[#fee3a0] shadow-[inset_0_1px_#d9b15e,inset_0_-1px_#d9b15e]' : 'odd:bg-white even:bg-[#e6f4fc]'}">
      <td class="text-right px-[2px]! ${on ? '' : 'bg-[#eaeff9]'}">${r[0]}</td>
      <td class="${on ? 'shadow-[inset_0_0_0_1px_#cf7f2a]' : ''}"><div class="flex items-center gap-px"><svg class="size-[8px] shrink-0"><use href="#${icons[r[0]] || 'i-job'}"/></svg>${r[1]}</div></td>
      <td>${r[2]}</td><td class="text-right px-[7px]!">1</td><td>${r[3]}</td>
      <td class="text-right px-[2px]!">${r[4]}</td><td class="text-right px-[2px]!">${r[5]}</td><td class="px-[6px]!">${r[6]}</td>
      <td class="text-right px-[6px]!">${r[7]}</td><td class="text-center">${r[8]}</td><td class="text-right">${r[9]}</td>
      <td>GENERIC KNIFE</td><td class="px-[5px]!">${r[10]}</td>
      <td class="text-right">${r[11]}</td><td class="text-center">${r[12]}</td><td class="text-right">1</td>
    </tr>`;
  }).join('');
</script>

</body>
</html>
